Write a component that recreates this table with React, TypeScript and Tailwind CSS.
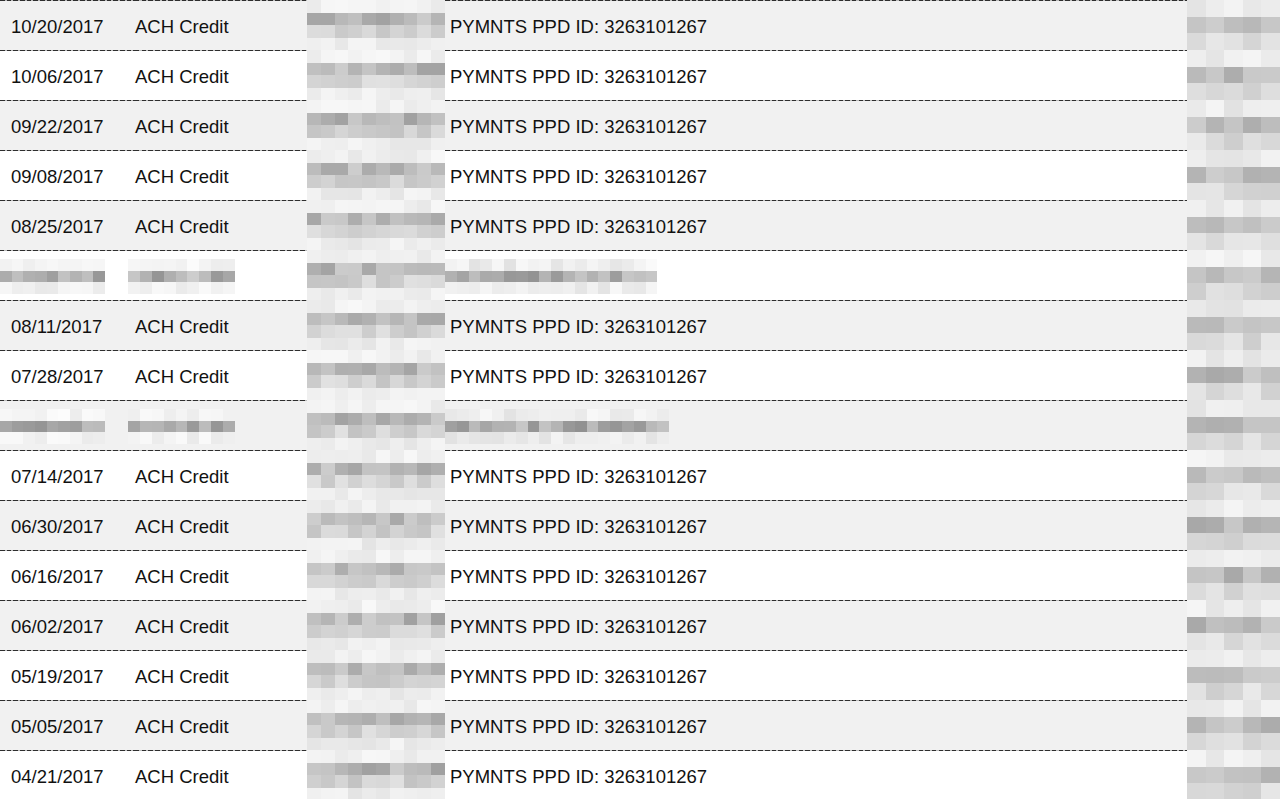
import React from 'react';

type Row = { date: string; blurred?: boolean; descCols?: number };

const rows: Row[] = [
  { date: '10/20/2017' },
  { date: '10/06/2017' },
  { date: '09/22/2017' },
  { date: '09/08/2017' },
  { date: '08/25/2017' },
  { date: '', blurred: true, descCols: 18 },
  { date: '08/11/2017' },
  { date: '07/28/2017' },
  { date: '', blurred: true, descCols: 19 },
  { date: '07/14/2017' },
  { date: '06/30/2017' },
  { date: '06/16/2017' },
  { date: '06/02/2017' },
  { date: '05/19/2017' },
  { date: '05/05/2017' },
  { date: '04/21/2017' },
];

// small seeded random so the redaction blocks stay the same between renders
const rand = (seed: number) => {
  let t = (seed + 0x6d2b79f5) | 0;
  t = Math.imul(t ^ (t >>> 15), t | 1);
  t ^= t + Math.imul(t ^ (t >>> 7), t | 61);
  return ((t ^ (t >>> 14)) >>> 0) / 4294967296;
};

const gray = (v: number) => `rgb(${v},${v},${v})`;

const Mosaic: React.FC<{ cols: number; bands: [number, number][]; seed: number }> = ({ cols, bands, seed }) => (
  <div className="flex flex-col h-full w-full">
    {bands.map(([lo, hi], b) => (
      <div key={b} className="flex flex-1">
        {Array.from({ length: cols }).map((_, c) => {
          const v = Math.round(lo + (hi - lo) * rand(seed * 977 + b * 131 + c * 17));
          return <div key={c} className="flex-1" style={{ backgroundColor: gray(v) }} />;
        })}
      </div>
    ))}
  </div>
);

const dashed =
  'bg-[repeating-linear-gradient(90deg,#2e2e2e_0_4.5px,#bbb_4.5px_6.67px)] bg-no-repeat bg-[length:100%_1px] bg-top';

const App: React.FC = () => {
  return (
    <div
      className="w-[1280px] h-[799px] overflow-hidden bg-white text-[18.5px] text-[#111]"
      style={{ fontFamily: '"Liberation Sans", Arial, sans-serif' }}
    >
      {rows.map((row, i) => {
        const bg = i % 2 === 0 ? 'bg-[#f1f1f1]' : 'bg-white';
        return (
          <div key={i} className={`flex h-[50px] ${bg}`}>
            {row.blurred ? (
              <>
                <div className={`w-[307px] h-full pt-[9px] pb-[6px] flex ${dashed}`}>
                  <div className="w-[105px] h-full">
                    <Mosaic cols={9} seed={i * 10 + 1} bands={[[236, 252], [145, 200], [232, 250]]} />
                  </div>
                  <div className="w-[23px]" />
                  <div className="w-[107px] h-full">
                    <Mosaic cols={9} seed={i * 10 + 2} bands={[[236, 252], [145, 205], [232, 250]]} />
                  </div>
                </div>
                <div className="w-[138px] h-full">
                  <Mosaic cols={10} seed={i * 10 + 3} bands={[[232, 248], [160, 205], [195, 225], [228, 245]]} />
                </div>
                <div className={`w-[742px] h-full pt-[9px] pb-[6px] ${dashed}`}>
                  <div className="h-full" style={{ width: (row.descCols ?? 18) * 11.8 }}>
                    <Mosaic cols={row.descCols ?? 18} seed={i * 10 + 4} bands={[[226, 250], [135, 200], [225, 248]]} />
                  </div>
                </div>
              </>
            ) : (
              <>
                <div className={`w-[135px] pl-[11px] pt-[3px] flex items-center ${dashed}`}>{row.date}</div>
                <div className={`w-[172px] pt-[3px] flex items-center ${dashed}`}>ACH Credit</div>
                <div className="w-[138px] h-full">
                  <Mosaic cols={10} seed={i * 10 + 3} bands={[[232, 248], [160, 205], [195, 225], [228, 245]]} />
                </div>
                <div className={`w-[742px] pl-[5px] pt-[3px] flex items-center ${dashed}`}>PYMNTS PPD ID: 3263101267</div>
              </>
            )}
            <div className="w-[93px] h-full">
              <Mosaic cols={5} seed={i * 10 + 7} bands={[[226, 246], [168, 205], [205, 234]]} />
            </div>
          </div>
        );
      })}
    </div>
  );
};

export default App;
